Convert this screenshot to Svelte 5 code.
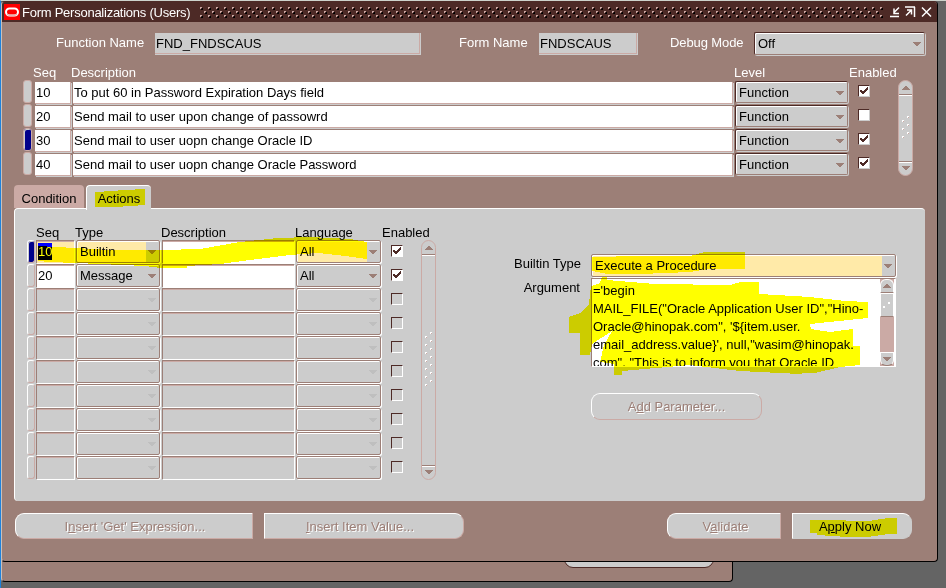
<script lang="ts">
	type Personalization = {
		seq: number;
		description: string;
		level: string;
		enabled: boolean;
	};

	type Action = {
		seq?: number;
		type?: string;
		language?: string;
		enabled?: boolean;
	};

	const functionName = 'FND_FNDSCAUS';
	const formName = 'FNDSCAUS';

	let selectedRule = $state(2);
	let selectedAction = $state(0);
	let activeTab = $state('Actions');

	const rules: Personalization[] = $state([
		{ seq: 10, description: 'To put 60 in Password Expiration Days field', level: 'Function', enabled: true },
		{ seq: 20, description: 'Send mail to user upon change of passowrd', level: 'Function', enabled: false },
		{ seq: 30, description: 'Send mail to user uopn change Oracle ID', level: 'Function', enabled: true },
		{ seq: 40, description: 'Send mail to user uopn change Oracle Password', level: 'Function', enabled: true }
	]);

	const actions: Action[] = $state([
		{ seq: 10, type: 'Builtin', language: 'All', enabled: true },
		{ seq: 20, type: 'Message', language: 'All', enabled: true },
		...Array.from({ length: 8 }, () => ({}))
	]);

	const argumentLines = [
		"='begin",
		'MAIL_FILE("Oracle Application User ID","Hino-',
		'Oracle@hinopak.com", \'${item.user.',
		"email_address.value}', null,\"wasim@hinopak.",
		'com", "This is to inform you that Oracle ID'
	];
</script>

{#snippet check(on: boolean | undefined)}
	<svg class="check-mark" width="12" height="12" viewBox="0 0 12 12" shape-rendering="crispEdges">
		{#if on}
			<path d="M2 5h2v1h2v-1h1v-1h1v-1h1v-1h1v3h-1v1h-1v1h-1v1h-1v1h-2v-1h-1v-1h-1z" fill="#4d2a26" />
		{/if}
	</svg>
{/snippet}

{#snippet arrow(up: boolean, color: string)}
	<svg class="arrow" width="8" height="4" viewBox="0 0 8 4" shape-rendering="crispEdges">
		<path d={up ? 'M0 4h8v-1h-1v-1h-1v-1h-1v-1h-2v1h-1v1h-1v1h-1z' : 'M0 0h8v1h-1v1h-1v1h-1v1h-2v-1h-1v-1h-1v-1h-1z'} fill={color} />
	</svg>
{/snippet}

{#snippet grip(rows: number)}
	<svg class="grip" width="8" height={rows * 8} viewBox="0 0 8 {rows * 8}" shape-rendering="crispEdges">
		{#each Array(rows) as _, i}
			<path d="M5 {i * 8}h2v2h-2zM0 {i * 8 + 4}h2v2h-2z" fill="#cbaaa5" />
			<path d="M5 {i * 8}h2v1h-1v1h-1zM0 {i * 8 + 4}h2v1h-1v1h-1z" fill="#fff" />
		{/each}
	</svg>
{/snippet}

<div class="desktop">
	<div class="back-window">
		<div class="back-button"></div>
	</div>

	<div class="window">
		<div class="title-bar">
			<svg class="logo" width="16" height="16" viewBox="0 0 16 16">
				<rect width="16" height="16" fill="#f00" />
				<rect x="2" y="4.5" width="12" height="7" rx="3.5" fill="none" stroke="#fff" stroke-width="2" />
				<path d="M3 10q1.500 1.500 3.500 1.500h3q2 0 3.500-1.500" fill="none" stroke="#e3b5b0" stroke-width="1.500" />
			</svg>
			<span class="title">Form Personalizations (Users)</span>
			<svg class="title-grip" width="683" height="11" shape-rendering="crispEdges">
				<defs>
					<pattern id="dots" width="8" height="8" patternUnits="userSpaceOnUse">
						<path d="M0 0h2v1h-1v1h-1zM4 4h2v1h-1v1h-1z" fill="#cbaaa5" />
						<path d="M2 1h1v2h-2v-1h1zM6 5h1v2h-2v-1h1z" fill="#000" />
					</pattern>
				</defs>
				<rect width="683" height="11" fill="url(#dots)" />
			</svg>
			<svg class="controls" width="44" height="12" viewBox="0 0 44 12" fill="none" stroke="#fff" stroke-width="1.500">
				<path d="M0 10.500h9M9 1.500l-5 5M4 2.500v5h5" />
				<path d="M15 1h10M24.500 1v10M16 9.500l5-5M17 4h4.500v4.500" />
				<path d="M32 1.500l9 9M41 1.500l-9 9" />
			</svg>
		</div>

		<div class="content">
			<div class="header-fields">
				<label class="function-field"><span class="caption">Function Name</span><span class="display wide">{functionName}</span></label>
				<label class="form-field"><span class="caption">Form Name</span><span class="display">{formName}</span></label>
				<label class="debug-field"><span class="caption">Debug Mode</span><span class="select dark debug">Off{@render arrow(false, '#9c7f77')}</span></label>
			</div>

			<div class="rules">
				<div class="rules-table">
					<div class="rule-head">
						<span>Seq</span><span>Description</span><span>Level</span><span>Enabled</span>
					</div>
					{#each rules as rule, i}
						<!-- svelte-ignore a11y_click_events_have_key_events, a11y_no_static_element_interactions -->
						<div class="rule-row" onclick={() => (selectedRule = i)}>
							<i class="marker" class:current={selectedRule === i}></i>
							<span class="cell">{rule.seq}</span>
							<span class="cell">{rule.description}</span>
							<span class="select dark">{rule.level}{@render arrow(false, '#9c7f77')}</span>
							<button class="check on" aria-label="Enabled" onclick={() => (rule.enabled = !rule.enabled)}>{@render check(rule.enabled)}</button>
						</div>
					{/each}
				</div>
				<div class="scrollbar rules-scroll">
					<span class="cap">{@render arrow(true, '#9c7f77')}</span>
					<span class="thumb">{@render grip(3)}</span>
					<span class="cap bottom">{@render arrow(false, '#9c7f77')}</span>
				</div>
			</div>

			<div class="tabs">
				{#each ['Condition', 'Actions'] as tab}
					<button class="tab" class:active={activeTab === tab} onclick={() => (activeTab = tab)}>{tab}</button>
				{/each}
			</div>

			<div class="panel">
				<div class="actions-table">
					<div class="action-head">
						<span>Seq</span><span>Type</span><span>Description</span><span>Language</span><span>Enabled</span>
					</div>
					{#each actions as action, i}
						<!-- svelte-ignore a11y_click_events_have_key_events, a11y_no_static_element_interactions -->
						<div class="action-row" class:empty={!action.seq} onclick={() => (selectedAction = i)}>
							<i class="marker light" class:current={selectedAction === i}></i>
							<span class="cell inset" class:needed={selectedAction === i}>
								{#if action.seq}<b class:picked={selectedAction === i}>{action.seq}</b>{/if}
							</span>
							<span class="select" class:required={selectedAction === i}>
								<em>{action.type ?? ''}</em>{@render arrow(false, action.seq ? '#9c7f77' : '#bfbfbf')}
							</span>
							<span class="cell inset"></span>
							<span class="select" class:required={selectedAction === i}>
								<em>{action.language ?? ''}</em>{@render arrow(false, action.seq ? '#9c7f77' : '#bfbfbf')}
							</span>
							<button class="check light" class:on={action.enabled} aria-label="Enabled">{@render check(action.enabled)}</button>
						</div>
					{/each}
				</div>
				<div class="scrollbar light actions-scroll">
					<span class="cap">{@render arrow(true, '#9c7f77')}</span>
					<span class="thumb">{@render grip(7)}</span>
					<span class="cap bottom">{@render arrow(false, '#9c7f77')}</span>
				</div>

				<div class="detail">
					<div class="detail-row">
						<span class="detail-label">Builtin Type</span>
						<span class="select required builtin"><em>Execute a Procedure</em>{@render arrow(false, '#9c7f77')}</span>
					</div>
					<div class="detail-row">
						<span class="detail-label">Argument</span>
						<div class="argument">
							<div class="argument-text">
								{#each argumentLines as line}<div>{line}</div>{/each}
							</div>
							<div class="argument-scroll">
								<span class="step up">{@render arrow(true, '#9c7f77')}</span>
								<span class="knob">
									<svg width="8" height="7" viewBox="0 0 8 7" shape-rendering="crispEdges">
										<path d="M5 0h2v2h-2zM0 4h2v2h-2z" fill="#fff" />
									</svg>
								</span>
								<span class="rail"></span>
								<span class="step down">{@render arrow(false, '#9c7f77')}</span>
							</div>
						</div>
					</div>
					<button class="btn disabled add">A<u>d</u>d Parameter...</button>
				</div>
			</div>

			<div class="footer">
				<button class="btn disabled left get">I<u>n</u>sert 'Get' Expression...</button>
				<button class="btn disabled right item"><u>I</u>nsert Item Value...</button>
				<button class="btn disabled left validate">V<u>a</u>lidate</button>
				<button class="btn right apply">A<u>p</u>ply Now</button>
			</div>
		</div>
	</div>

	<!-- marker strokes over the fields -->
	<svg class="marker-ink" width="946" height="588" viewBox="0 0 946 588" fill="#ff0" shape-rendering="crispEdges">
		<path d="M95 192L112 191L124 190L145 189V205L116 207H95Z" />
		<path d="M38 246L75 248L110 250H161L200 249L240 242L278 238L310 237L350 239L367 242V259L345 256L318 253L290 255L250 260L220 264L187 266V268H161L145 266L100 264L50 262L38 261Z" />
		<path d="M592 257L640 256L690 256L705 252H745V269H708L690 272L640 274H608L592 271Z" />
		<path d="M602 277H607V280L655 284L730 285L741 282H759V294L810 297L845 301L868 302V318L810 324L811 329L830 332L853 329V346H860V365L840 367L815 373H804L800 374L740 371L690 365L622 371V375H614V364L600 362L604 345L612 331L592 344L590 355H580V333H569V317L580 313L589 304L591 286L600 283Z" />
		<path d="M810 520H845L847 521H869L888 518H897V534H888L868 537H847L817 535V533H810Z" />
	</svg>
</div>

<style>
	:global(body) {
		margin: 0;
		background: #646464;
	}

	.desktop {
		position: relative;
		width: 946px;
		height: 588px;
		overflow: hidden;
		box-sizing: border-box;
		border-top: 1px solid #cdd3cc;
		border-left: 1px solid #1e82dc;
		background: #646464;
		color: #000;
		font: 13px/16px 'Liberation Sans', Arial, sans-serif;
	}

	.desktop * {
		box-sizing: border-box;
	}

	button {
		padding: 0;
		margin: 0;
		border: 0;
		font: inherit;
		color: inherit;
	}

	.window,
	.back-window {
		position: absolute;
		left: 0;
		border: solid #000;
		border-width: 0 1px 1px 0;
		background: #9c7f77;
	}

	.window {
		top: 0;
		width: 937px;
		height: 561px;
		border-top: 1px solid #4d2a26;
		border-left: 1px solid #c9c0bc;
		border-radius: 4px;
	}

	.back-window {
		top: 540px;
		width: 732px;
		height: 41px;
		padding-left: 562px;
		border-left: 1px solid #c9c0bc;
		border-radius: 0 0 4px 4px;
	}

	.back-button {
		width: 150px;
		height: 27px;
		border: 1px solid #4d2a26;
		border-radius: 0 0 9px 9px;
		background: #ccc;
	}

	.title-bar {
		display: flex;
		align-items: center;
		height: 20px;
		padding-left: 2px;
		background: #4d2a26;
		border-radius: 3px 3px 0 0;
		color: #fff;
	}

	.title {
		width: 178px;
		padding: 1px 0 0 2px;
		letter-spacing: -0.25px;
		white-space: nowrap;
	}

	.title-grip {
		margin: 1px 0 0 2px;
	}

	.controls {
		margin-left: 7px;
	}

	.content {
		display: flex;
		flex-direction: column;
	}

	.header-fields {
		display: flex;
		height: 42px;
		padding-top: 10px;
		color: #fff;
	}

	.header-fields label {
		display: flex;
		line-height: 21px;
	}

	.caption {
		white-space: nowrap;
	}

	.function-field {
		margin-left: 54px;
	}

	.function-field .caption {
		width: 99px;
	}

	.form-field {
		margin-left: 38px;
	}

	.form-field .caption {
		width: 80px;
	}

	.debug-field {
		margin-left: 32px;
	}

	.debug-field .caption {
		width: 84px;
		letter-spacing: -0.1px;
	}

	.display {
		width: 99px;
		height: 22px;
		margin-top: 1px;
		padding: 1px 0 0 1px;
		border: solid #ccc;
		border-width: 0 1px 1px 0;
		box-shadow: inset -1px -1px #cbaaa5;
		background: #ccc;
		color: #000;
		line-height: 20px;
	}

	.display.wide {
		width: 266px;
	}

	.select {
		display: flex;
		align-items: center;
		justify-content: space-between;
		height: 23px;
		padding: 0 3px;
		border: 1px solid #9c7f77;
		border-radius: 2px;
		box-shadow: inset 1px 1px #fff, 1px 1px #fff;
		background: #ccc;
		color: #000;
	}

	.select em {
		font-style: normal;
	}

	.select.dark {
		border-color: #4d2a26 #9c7f77 #9c7f77 #4d2a26;
		box-shadow: inset 1px 1px #fff, 1px 1px #ccc;
	}

	.select.required {
		background: linear-gradient(#ffeaa8, #ffeaa8) 1px 1px / calc(100% - 14px) 100% no-repeat #ccc;
	}

	.debug {
		width: 171px;
	}

	.rules {
		display: flex;
	}

	.rules-table {
		width: 896px;
	}

	.rule-head,
	.rule-row {
		display: grid;
		grid-template-columns: 12px 38px 662px 114px 60px;
		padding-left: 21px;
		height: 24px;
	}

	.rule-head {
		grid-template-columns: 38px 663px 115px 60px;
		height: 16px;
		padding: 1px 0 0 31px;
		color: #fff;
	}

	.cell {
		width: calc(100% - 2px);
		height: 22px;
		margin-top: 2px;
		padding-left: 1px;
		border: solid #cbaaa5;
		border-width: 0 1px 1px 0;
		box-shadow: 1px 1px #ccc;
		background: #fff;
		line-height: 21px;
		white-space: nowrap;
	}

	.rule-row .select {
		width: 113px;
		height: 22px;
		margin-top: 1px;
		padding-top: 1px;
	}

	.marker {
		width: 9px;
		height: 23px;
		border: 1px solid #cbaaa5;
		border-radius: 3px;
		background: #ccc;
	}

	.marker.current {
		background: #00008b;
		box-shadow: inset 1px 1px #ccc;
	}

	.marker.light {
		width: 8px;
		border-color: #fff #cbaaa5 #cbaaa5 #fff;
	}

	.check {
		width: 12px;
		height: 12px;
		margin: 5px 0 0 9px;
		border: 1px solid #4d2a26;
		border-right-color: #ccc;
		border-bottom-color: #ccc;
		background: #fff;
	}

	.check.light {
		border-right-color: #fff;
		border-bottom-color: #fff;
		background: #ccc;
	}

	.check.light.on {
		background: #fff;
	}

	.check-mark {
		display: block;
		margin: -1px;
	}

	.scrollbar {
		display: flex;
		flex-direction: column;
		width: 15px;
		border: 1px solid #cbaaa5;
		border-radius: 8px;
		background: #ccc;
		overflow: hidden;
	}

	.rules-scroll {
		height: 96px;
		margin-top: 16px;
	}

	.cap {
		display: flex;
		align-items: center;
		justify-content: center;
		height: 14px;
		padding-top: 1px;
		border-bottom: 1px solid #9c7f77;
		box-shadow: 0 1px #fff;
	}

	.cap.bottom {
		padding: 0 0 1px;
		border-top: 1px solid #9c7f77;
		border-bottom: 0;
		box-shadow: inset 0 1px #fff;
	}

	.thumb {
		display: flex;
		flex: 1;
		align-items: center;
		justify-content: center;
	}

	.tabs {
		display: flex;
		gap: 2px;
		height: 24px;
		margin: 9px 0 0 12px;
	}

	.tab {
		width: 70px;
		height: 23px;
		padding-top: 5px;
		border-radius: 4px 4px 0 0;
		background: #cbaaa5;
	}

	.tab.active {
		z-index: 1;
		width: 65px;
		height: 25px;
		padding-top: 1px;
		border: solid #fff;
		border-width: 1px 0 0 1px;
		background: #ccc;
	}

	.panel {
		display: flex;
		width: 911px;
		height: 293px;
		margin: -1px 0 0 12px;
		border: solid #fff;
		border-width: 1px 0 0 1px;
		border-radius: 4px;
		background: #ccc;
	}

	.actions-table {
		width: 406px;
		padding-top: 15px;
	}

	.action-head,
	.action-row {
		display: grid;
		grid-template-columns: 9px 40px 86px 134px 86px 30px;
		height: 24px;
		padding-left: 12px;
	}

	.action-head {
		grid-template-columns: 39px 86px 134px 87px 50px;
		height: 16px;
		padding: 1px 0 0 21px;
	}

	.action-row .select {
		width: 84px;
	}

	.action-row .cell + .select:nth-child(5) {
		width: 85px;
	}

	.cell.inset {
		width: calc(100% - 2px);
		height: 23px;
		margin-top: 0;
		border: solid #9c7f77;
		border-width: 1px 0 0 1px;
		box-shadow: 1px 1px #fff, inset 0 1px #cbaaa5;
		line-height: 22px;
	}

	.cell b {
		font-weight: normal;
	}

	.cell.needed {
		background: #ffeaa8;
	}

	.cell .picked {
		padding: 1px 0;
		background: #00f;
		color: #fff;
	}

	.empty .cell {
		background: #ccc;
	}

	.actions-scroll {
		height: 240px;
		margin-top: 31px;
	}

	.detail {
		width: 476px;
		padding: 45px 0 0 78px;
	}

	.detail-row {
		display: flex;
		height: 24px;
	}

	.detail-label {
		width: 66px;
		margin-right: 11px;
		padding-top: 2px;
		text-align: right;
		white-space: nowrap;
		flex: none;
	}

	.builtin {
		width: 305px;
		flex: none;
	}

	.argument {
		display: flex;
		width: 305px;
		height: 89px;
		flex: none;
		border: 1px solid #9c7f77;
		border-right-color: #fff;
		border-bottom-color: #fff;
		background: #fff;
		overflow: hidden;
	}

	.argument-text {
		flex: 1;
		padding: 3px 0 0 1px;
		line-height: 18px;
		white-space: pre;
		overflow: hidden;
	}

	.argument-scroll {
		display: flex;
		flex-direction: column;
		width: 14px;
		margin: 0 1px;
		background: #cbaaa5;
	}

	.step,
	.knob {
		display: flex;
		align-items: center;
		justify-content: center;
		height: 14px;
		border: 1px solid #fff;
		border-bottom-color: #9c7f77;
		background: #ccc;
	}

	.step.up {
		border-radius: 6px 6px 0 0;
	}

	.step.down {
		border-radius: 0 0 6px 6px;
	}

	.knob {
		height: 24px;
	}

	.rail {
		flex: 1;
	}

	.btn {
		height: 26px;
		padding-top: 1px;
		border: 1px solid #fff;
		border-right-color: #cbaaa5;
		border-bottom-color: #cbaaa5;
		background: #ccc;
		text-align: center;
	}

	.btn.disabled {
		color: #9c7f77;
		text-shadow: 1px 1px #fff;
	}

	.btn u {
		text-underline-offset: 1px;
	}

	.left {
		border-radius: 9px 0 0 9px;
	}

	.right {
		border-radius: 0 9px 9px 0;
	}

	.add {
		width: 171px;
		height: 27px;
		margin: 91px 0 0 77px;
		padding-top: 0;
		border-radius: 9px;
	}

	.footer {
		display: flex;
		margin: 12px 0 0 13px;
	}

	.get {
		width: 238px;
		padding-left: 2px;
	}

	.item {
		width: 200px;
		margin-left: 11px;
		padding-right: 8px;
	}

	.validate {
		width: 114px;
		margin-left: 203px;
		padding-left: 3px;
	}

	.apply {
		width: 120px;
		margin-left: 11px;
		padding-right: 4px;
		border-right-color: #ccc;
		border-bottom-color: #ccc;
	}

	.marker-ink {
		position: absolute;
		top: -1px;
		left: -1px;
		z-index: 2;
		mix-blend-mode: multiply;
		pointer-events: none;
	}
</style>
